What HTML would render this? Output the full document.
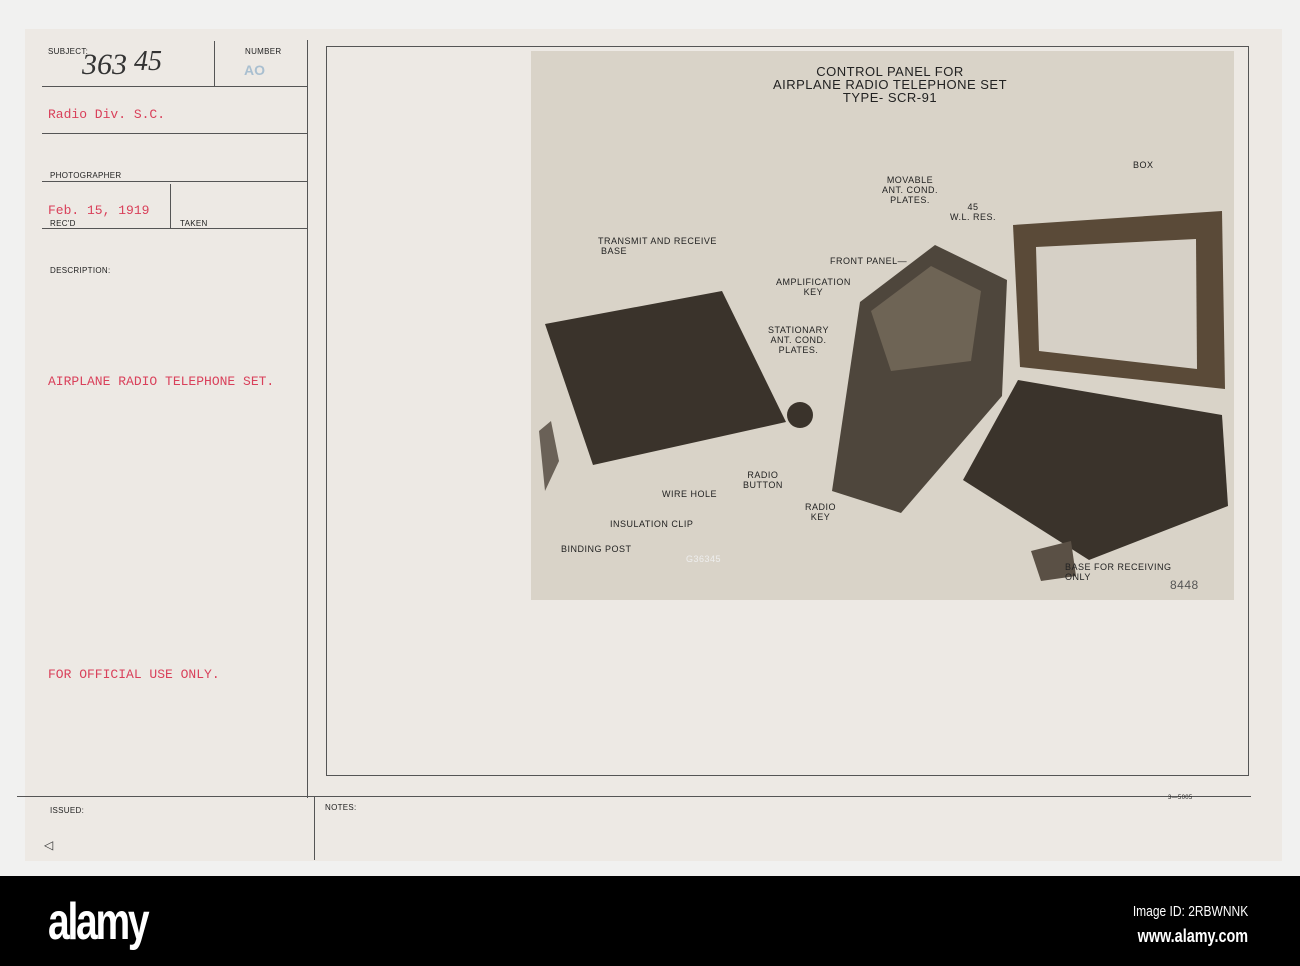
<!DOCTYPE html><html><head><meta charset="utf-8"><style>
body{margin:0;width:1300px;height:966px;background:#f1f1f0;position:relative;overflow:hidden;font-family:"Liberation Sans",sans-serif}
.a{position:absolute}
.card{left:25px;top:29px;width:1257px;height:832px;background:#ede9e4;}
.h{position:absolute;height:1px;background:#555}
.v{position:absolute;width:1px;background:#555}
.lab{position:absolute;font-size:8px;color:#222;letter-spacing:.3px}
.red{position:absolute;font-family:"Liberation Mono",monospace;color:#d9405a;font-size:13px}
.ph{position:absolute;font-size:9px;color:#222;letter-spacing:.5px;text-align:center;line-height:10px}
</style></head><body>
<div class="a card"></div>
<div class="h" style="left:42px;top:86px;width:265px"></div>
<div class="h" style="left:42px;top:133px;width:265px"></div>
<div class="h" style="left:42px;top:181px;width:265px"></div>
<div class="h" style="left:42px;top:228px;width:265px"></div>
<div class="v" style="left:214px;top:41px;height:45px"></div>
<div class="v" style="left:170px;top:184px;height:44px"></div>
<div class="v" style="left:307px;top:40px;height:758px"></div>
<div class="v" style="left:314px;top:796px;height:64px"></div>
<div class="a" style="left:326px;top:46px;width:923px;height:730px;border:1px solid #555;box-sizing:border-box"></div>
<div class="h" style="left:17px;top:796px;width:1234px"></div>
<div class="lab" style="left:48px;top:47px">SUBJECT:</div>
<div class="a" style="left:82px;top:48px;font-family:'Liberation Serif',serif;font-style:italic;font-size:30px;color:#333">363</div>
<div class="a" style="left:134px;top:46px;font-family:'Liberation Serif',serif;font-style:italic;font-size:28px;color:#333">45</div>
<div class="lab" style="left:245px;top:47px">NUMBER</div>
<div class="a" style="left:244px;top:62px;font-size:14px;color:#a9bfd0;font-weight:bold">AO</div>
<div class="red" style="left:48px;top:107px">Radio Div. S.C.</div>
<div class="lab" style="left:50px;top:171px">PHOTOGRAPHER</div>
<div class="red" style="left:48px;top:203px">Feb. 15, 1919</div>
<div class="lab" style="left:50px;top:219px">REC'D</div>
<div class="lab" style="left:180px;top:219px">TAKEN</div>
<div class="lab" style="left:50px;top:266px">DESCRIPTION:</div>
<div class="red" style="left:48px;top:374px">AIRPLANE RADIO TELEPHONE SET.</div>
<div class="red" style="left:48px;top:667px">FOR OFFICIAL USE ONLY.</div>
<div class="lab" style="left:50px;top:806px">ISSUED:</div>
<div class="lab" style="left:325px;top:803px">NOTES:</div>
<div class="lab" style="left:1168px;top:795px;font-size:6px">3—5005</div>
<div class="a" style="left:44px;top:838px;font-size:12px;color:#333">◁</div>
<!-- photo -->
<div class="a" style="left:531px;top:51px;width:703px;height:549px;background:#d9d3c8"></div>
<svg class="a" style="left:531px;top:51px" width="703" height="549">
<polygon points="482,174 691,160 694,338 489,316" fill="#5a4a38"/>
<polygon points="505,196 665,188 666,318 508,300" fill="#d6d0c6"/>
<polygon points="14,273 191,240 255,371 62,414" fill="#3a332b"/>
<polygon points="8,380 20,370 28,410 14,440" fill="#6a6157"/>
<polygon points="329,251 404,194 476,229 471,345 370,462 301,440" fill="#4e463c"/>
<polygon points="340,260 400,215 450,240 440,310 360,320" fill="#6e6455"/>
<polygon points="487,329 691,364 697,455 558,509 432,429" fill="#3a332b"/>
<polygon points="500,500 540,490 545,525 510,530" fill="#5a5045"/>
<circle cx="269" cy="364" r="13" fill="#3a332b"/>
</svg>
<div class="ph" style="left:740px;top:65px;font-size:13px;line-height:13px;width:300px">CONTROL PANEL FOR<br>AIRPLANE RADIO TELEPHONE SET<br>TYPE- SCR-91</div>
<div class="ph" style="left:1133px;top:160px">BOX</div>
<div class="ph" style="left:860px;top:175px;width:100px">MOVABLE<br>ANT. COND.<br>PLATES.</div>
<div class="ph" style="left:950px;top:202px">45<br>W.L. RES.</div>
<div class="ph" style="left:598px;top:236px;text-align:left">TRANSMIT AND RECEIVE<br>&nbsp;BASE</div>
<div class="ph" style="left:830px;top:256px">FRONT PANEL—</div>
<div class="ph" style="left:776px;top:277px">AMPLIFICATION<br>KEY</div>
<div class="ph" style="left:768px;top:325px">STATIONARY<br>ANT. COND.<br>PLATES.</div>
<div class="ph" style="left:743px;top:470px">RADIO<br>BUTTON</div>
<div class="ph" style="left:805px;top:502px">RADIO<br>KEY</div>
<div class="ph" style="left:662px;top:489px">WIRE HOLE</div>
<div class="ph" style="left:610px;top:519px">INSULATION CLIP</div>
<div class="ph" style="left:561px;top:544px">BINDING POST</div>
<div class="ph" style="left:686px;top:554px;color:#eee">G36345</div>
<div class="ph" style="left:1065px;top:562px;text-align:left">BASE FOR RECEIVING<br>ONLY</div>
<div class="ph" style="left:1170px;top:580px;font-size:12px;color:#555">8448</div>
<!-- footer -->
<div class="a" style="left:0;top:876px;width:1300px;height:90px;background:#000"></div>
<div class="a" style="left:48px;top:892px;font-size:52px;font-weight:bold;color:#fff;letter-spacing:-3px;transform:scaleX(.75);transform-origin:left">alamy</div>
<div class="a" style="right:52px;top:903px;font-size:15px;color:#fff;transform:scaleX(.8);transform-origin:right">Image ID: 2RBWNNK</div>
<div class="a" style="right:52px;top:926px;font-size:18px;font-weight:bold;color:#fff;transform:scaleX(.8);transform-origin:right">www.alamy.com</div>
</body></html>
